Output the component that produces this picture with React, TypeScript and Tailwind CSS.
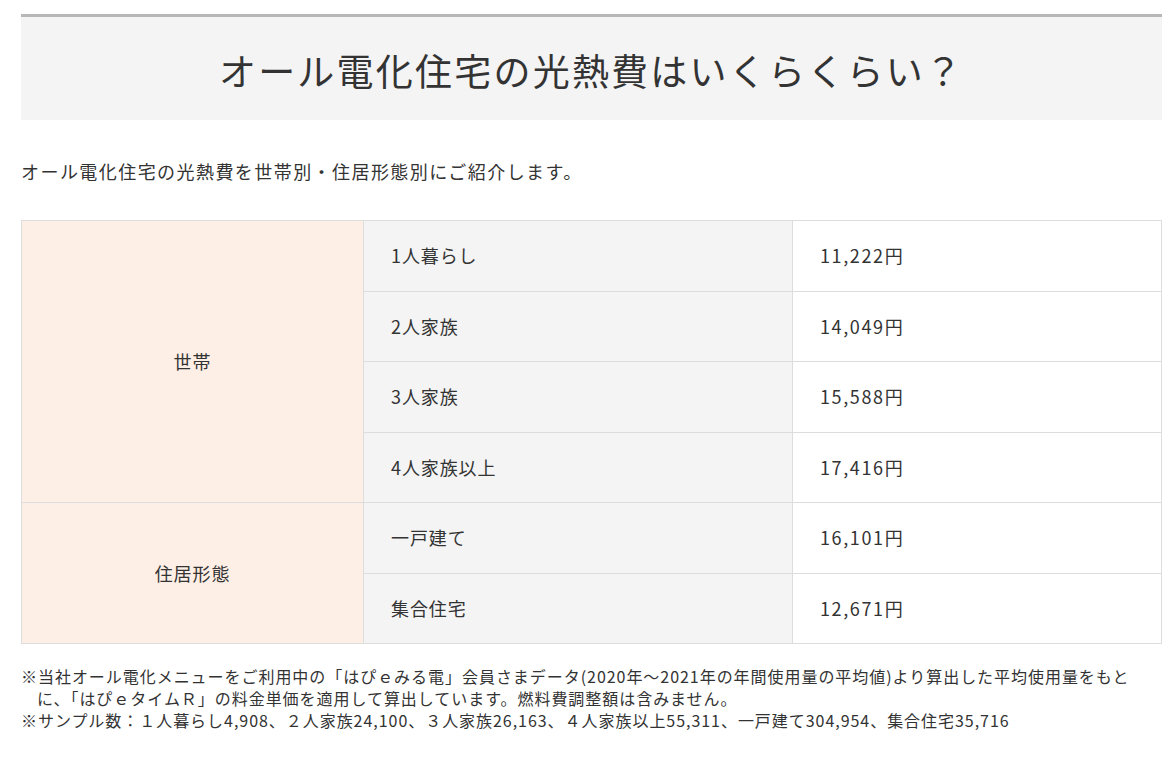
const rows: { group?: { label: string; span: number }; name: string; price: string }[] = [
  { group: { label: '世帯', span: 4 }, name: '1人暮らし', price: '11,222円' },
  { name: '2人家族', price: '14,049円' },
  { name: '3人家族', price: '15,588円' },
  { name: '4人家族以上', price: '17,416円' },
  { group: { label: '住居形態', span: 2 }, name: '一戸建て', price: '16,101円' },
  { name: '集合住宅', price: '12,671円' },
]

export default function App() {
  return (
    <div
      className="min-h-[762px] bg-white text-[#333333]"
      style={{ fontFamily: '"Noto Sans CJK JP", "Noto Sans", sans-serif' }}
    >
      <div className="ml-[21px] w-[1141px] pt-[14px]">
        <h1 className="flex h-[106px] items-center justify-center border-t-[3px] border-[#b8b8b8] bg-[#f4f4f4] pt-[4px] text-[37px] font-normal tracking-[0.06em]">
          オール電化住宅の光熱費はいくらくらい？
        </h1>

        <p className="mt-[38px] text-[18px] leading-[26px] tracking-[0.08em]">
          オール電化住宅の光熱費を世帯別・住居形態別にご紹介します。
        </p>

        <div className="mt-[36px] grid grid-cols-[342px_429px_1fr] border-l border-t border-[#dddddd] text-[18px] tracking-[0.05em]">
          {rows.map((r) => (
            <>
              {r.group && (
                <div
                  key={r.group.label}
                  className={`flex items-center justify-center border-b border-r border-[#dddddd] bg-[#fdefe6] ${
                    r.group.span === 4 ? 'row-span-4' : 'row-span-2'
                  }`}
                >
                  {r.group.label}
                </div>
              )}
              <div
                key={r.name}
                className="flex h-[70.5px] items-center border-b border-r border-[#dddddd] bg-[#f4f4f4] pl-[27px]"
              >
                {r.name}
              </div>
              <div
                key={r.price}
                className="flex h-[70.5px] items-center border-b border-r border-[#dddddd] pl-[27px] tracking-[0.09em]"
              >
                {r.price}
              </div>
            </>
          ))}
        </div>

        <div className="mt-[21px] text-[16px] leading-[22px] tracking-[0.06em]">
          <p className="pl-[1em] -indent-[1em]">
            ※当社オール電化メニューをご利用中の「はぴｅみる電」会員さまデータ(2020年～2021年の年間使用量の平均値)より算出した平均使用量をもと
            <br />
            に、「はぴｅタイムＲ」の料金単価を適用して算出しています。燃料費調整額は含みません。
          </p>
          <p className="pl-[1em] -indent-[1em]">
            ※サンプル数：１人暮らし4,908、２人家族24,100、３人家族26,163、４人家族以上55,311、一戸建て304,954、集合住宅35,716
          </p>
        </div>
      </div>
    </div>
  )
}
